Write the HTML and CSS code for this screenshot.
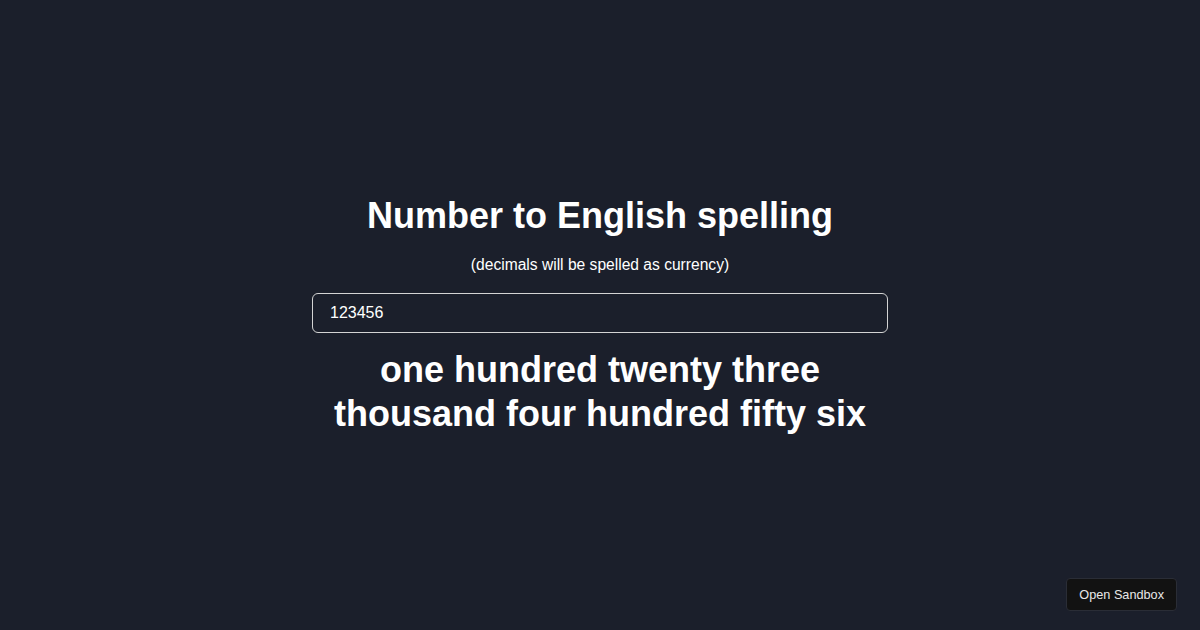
FILE: index.html
```html
<!DOCTYPE html>
<html lang="en">

<head>
    <meta charset="UTF-8">
    <meta name="viewport" content="width=device-width, initial-scale=1.0">
    <title>Number to English spelling</title>
    <link rel="stylesheet" href="styles.css">
</head>

<body>

    <main class="app">
        <h1>Number to English spelling</h1>
        <p class="hint">(decimals will be spelled as currency)</p>
        <input type="text" class="number-input" value="123456">
        <div class="spelled">one hundred twenty three thousand four hundred fifty six</div>
    </main>

    <button class="sandbox-btn">Open Sandbox</button>

</body>

</html>
```

FILE: styles.css
```css
html,
body {
    height: 100%;
}

body {
    margin: 0;
    background-color: #1b1f2b;
    color: #ffffff;
    font-family: 'Liberation Sans', Arial, sans-serif;
}

.app {
    height: 100%;
    display: flex;
    flex-direction: column;
    align-items: center;
    justify-content: center;
}

h1 {
    margin: 0;
    font-size: 36px;
    font-weight: bold;
    line-height: 42px;
}

.hint {
    margin: 18px 0 18px;
    font-size: 15.6px;
    line-height: 20px;
}

.number-input {
    width: 576px;
    height: 40px;
    box-sizing: border-box;
    padding: 0 17px;
    background-color: #1b1f2b;
    color: #ffffff;
    border: 1px solid #d4d4d4;
    border-radius: 6px;
    font-family: inherit;
    font-size: 16px;
}

.spelled {
    width: 576px;
    margin-top: 15px;
    text-align: center;
    font-size: 36px;
    font-weight: bold;
    line-height: 44px;
}

/* floating link in the corner */
.sandbox-btn {
    position: fixed;
    right: 23px;
    bottom: 19px;
    padding: 0 12px;
    height: 33px;
    background-color: #121212;
    color: #e8e8e8;
    border: 1px solid #2a2d36;
    border-radius: 4px;
    font-family: inherit;
    font-size: 12.7px;
    cursor: pointer;
}
```
